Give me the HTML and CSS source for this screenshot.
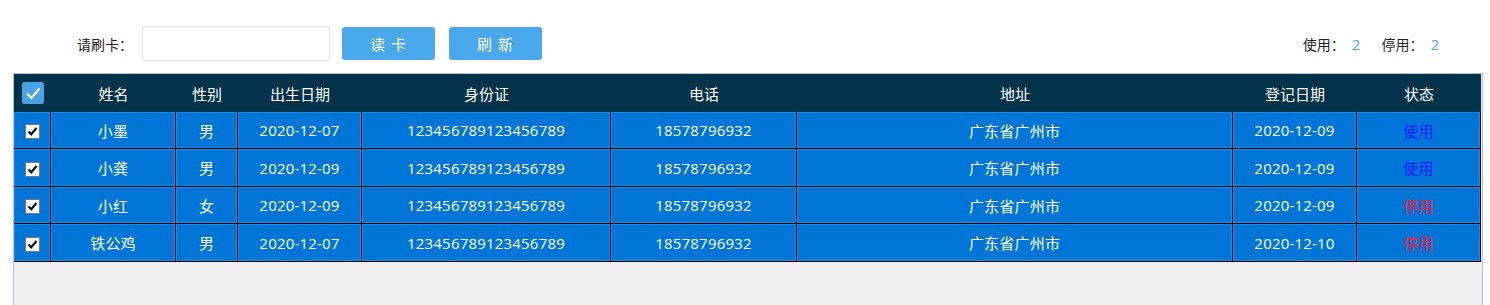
FILE: index.html
```html
<!DOCTYPE html>
<html lang="zh-CN">
<head>
<meta charset="utf-8">
<title>刷卡</title>
<link rel="stylesheet" href="styles.css">
</head>
<body>
<div class="page">
  <div class="toolbar">
    <div class="left">
      <span class="label">请刷卡：</span>
      <input class="card-input" type="text">
      <button class="btn">读 卡</button>
      <button class="btn">刷 新</button>
    </div>
    <div class="stats">
      <span class="stat-label">使用：</span><span class="stat-num">2</span>
      <span class="stat-label second">停用：</span><span class="stat-num">2</span>
    </div>
  </div>
  <div class="panel">
    <table class="grid">
      <colgroup>
        <col class="c0"><col class="c1"><col class="c2"><col class="c3"><col class="c4"><col class="c5"><col class="c6"><col class="c7"><col class="c8">
      </colgroup>
      <thead>
        <tr>
          <th><span class="head-check"><svg viewBox="0 0 22 22" width="22" height="22"><path d="M5 11.5 L9.5 16 L17.5 6.5" fill="none" stroke="#fff" stroke-width="2"/></svg></span></th>
          <th>姓名</th><th>性别</th><th>出生日期</th><th>身份证</th><th>电话</th><th>地址</th><th>登记日期</th><th>状态</th>
        </tr>
      </thead>
      <tbody>
        <tr>
          <td><span class="box"><svg viewBox="0 0 13 13" width="13" height="13"><path d="M2.5 6.5 L5.2 9.3 L10.5 3" fill="none" stroke="#111" stroke-width="2.2"/></svg></span></td>
          <td>小墨</td><td>男</td><td>2020-12-07</td><td>123456789123456789</td><td>18578796932</td><td>广东省广州市</td><td>2020-12-09</td><td class="on">使用</td>
        </tr>
        <tr>
          <td><span class="box"><svg viewBox="0 0 13 13" width="13" height="13"><path d="M2.5 6.5 L5.2 9.3 L10.5 3" fill="none" stroke="#111" stroke-width="2.2"/></svg></span></td>
          <td>小龚</td><td>男</td><td>2020-12-09</td><td>123456789123456789</td><td>18578796932</td><td>广东省广州市</td><td>2020-12-09</td><td class="on">使用</td>
        </tr>
        <tr>
          <td><span class="box"><svg viewBox="0 0 13 13" width="13" height="13"><path d="M2.5 6.5 L5.2 9.3 L10.5 3" fill="none" stroke="#111" stroke-width="2.2"/></svg></span></td>
          <td>小红</td><td>女</td><td>2020-12-09</td><td>123456789123456789</td><td>18578796932</td><td>广东省广州市</td><td>2020-12-09</td><td class="off">停用</td>
        </tr>
        <tr>
          <td><span class="box"><svg viewBox="0 0 13 13" width="13" height="13"><path d="M2.5 6.5 L5.2 9.3 L10.5 3" fill="none" stroke="#111" stroke-width="2.2"/></svg></span></td>
          <td>铁公鸡</td><td>男</td><td>2020-12-07</td><td>123456789123456789</td><td>18578796932</td><td>广东省广州市</td><td>2020-12-10</td><td class="off">停用</td>
        </tr>
      </tbody>
    </table>
  </div>
</div>
</body>
</html>
```

FILE: styles.css
```css
html, body {
  margin: 0;
  padding: 0;
  background: #fff;
  font-family: "Open Sans", "Noto Sans CJK SC", sans-serif;
  font-size: 14px;
  color: #222;
}
.page {
  padding-left: 13px;
  width: 1470px;
}
.toolbar {
  height: 73px;
  display: flex;
  align-items: flex-start;
  justify-content: space-between;
  box-sizing: border-box;
  padding: 26px 44px 0 64px;
}
.left {
  display: flex;
  align-items: center;
  height: 35px;
}
.label {
  font-size: 14px;
  color: #222;
  margin-right: 9px;
}
.card-input {
  width: 188px;
  height: 35px;
  box-sizing: border-box;
  border: 1px solid #dcdfe6;
  border-radius: 4px;
  outline: none;
  margin: 0 12px 0 0;
  padding: 0 8px;
}
.btn {
  width: 93px;
  height: 33px;
  border: none;
  border-radius: 3px;
  background: #4aa9ec;
  color: #fff;
  font-family: inherit;
  font-size: 15px;
  letter-spacing: 1px;
  margin-right: 14px;
  padding: 0;
}
.stats {
  display: flex;
  align-items: center;
  height: 35px;
  font-size: 14px;
}
.stat-label { color: #222; }
.stat-label.second { margin-left: 21px; }
.stat-num {
  color: #4aa9ec;
  margin-left: 7px;
  font-size: 15px;
}
.panel {
  border: 1px solid #a9c4dc;
  background: #efefef;
  height: 260px;
}
.grid {
  border-collapse: separate;
  border-spacing: 0;
  table-layout: fixed;
  width: 1467px;
  font-size: 15px;
}
.c0 { width: 37px; }
.c1 { width: 125px; }
.c2 { width: 62px; }
.c3 { width: 124px; }
.c4 { width: 249px; }
.c5 { width: 186px; }
.c6 { width: 436px; }
.c7 { width: 124px; }
.c8 { width: 124px; }
.grid th {
  background: #02334b;
  color: #fff;
  font-weight: normal;
  height: 38px;
  padding: 0;
  text-align: center;
}
.head-check {
  display: inline-flex;
  width: 22px;
  height: 22px;
  background: #4ba3e6;
  border-radius: 3px;
  vertical-align: middle;
}
.grid td {
  background: #0075d8;
  color: #fff;
  text-align: center;
  height: 36px;
  padding: 0;
  letter-spacing: 0.2px;
  border-right: 1px solid #000;
  border-bottom: 1px solid #000;
  box-shadow: inset 0 0 0 1px #2589e0;
}
.grid tr:nth-child(even) td { height: 37px; }
.box {
  display: inline-flex;
  width: 13px;
  height: 13px;
  background: #fff;
  border: 1px solid #7a7a7a;
  vertical-align: middle;
}
.grid td.on { color: #0a1aff; }
.grid td.off { color: #ff1a3c; }
```
